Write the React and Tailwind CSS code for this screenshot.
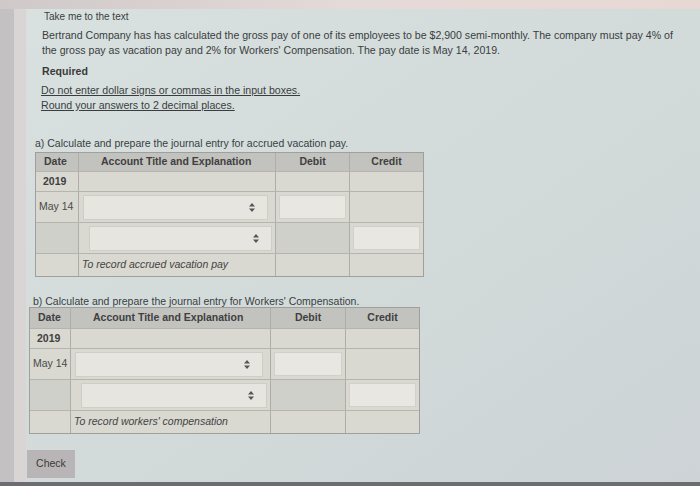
import { useState } from "react";

const tables = [
  {
    key: "a",
    title: "a) Calculate and prepare the journal entry for accrued vacation pay.",
    note: "To record accrued vacation pay",
    pad: "pl-[35px]",
    titlePad: "pl-[35px]",
    head: "h-[18px]",
    cols: ["w-[43px]", "w-[197px]", "w-[74px]", "w-[73px]"],
  },
  {
    key: "b",
    title: "b) Calculate and prepare the journal entry for Workers' Compensation.",
    note: "To record workers' compensation",
    pad: "pl-[29px]",
    titlePad: "pl-[33px]",
    head: "h-[20px]",
    cols: ["w-[41px]", "w-[200px]", "w-[75px]", "w-[73px]"],
  },
];

function SelectBox({ indent }) {
  return (
    <div className={`h-[25px] flex items-center justify-end pr-[12px] bg-[#e6e5e0] border border-[#cfcdc6] ${indent ? "ml-[10px] mr-[3px]" : "ml-[4px] mr-[7px]"}`}>
      <svg width="6" height="9" viewBox="0 0 6 9">
        <path d="M3 0 L6 3.5 H0 Z M3 9 L6 5.5 H0 Z" fill="#555" />
      </svg>
    </div>
  );
}

function TextBox() {
  return <div className="h-[24px] mx-[3px] bg-[#e8e7e2] border border-[#d2d0ca]" />;
}

function Journal({ t }) {
  const [c0, c1, c2, c3] = t.cols;
  const cell = "border-r border-[#aeada8] flex items-center";
  return (
    <div className={t.pad}>
      <div className="w-fit border border-[#a09f9b] bg-[#d9d8d1] text-[10.5px] text-[#3a3a3a]">
        <div className={`flex ${t.head} bg-[#c2c2bf] font-bold text-[#404040]`}>
          <div className={`${c0} ${cell} pl-[8px]`}>Date</div>
          <div className={`${c1} ${cell} pl-[22px]`}>Account Title and Explanation</div>
          <div className={`${c2} ${cell} justify-center`}>Debit</div>
          <div className={`${c3} flex items-center justify-center`}>Credit</div>
        </div>
        <div className="flex h-[20px] border-t border-[#b5b4ae]">
          <div className={`${c0} ${cell} pl-[7px] font-bold text-[#404040]`}>2019</div>
          <div className={`${c1} ${cell}`} />
          <div className={`${c2} ${cell}`} />
          <div className={c3} />
        </div>
        <div className="flex h-[31px] border-t border-[#b5b4ae]">
          <div className={`${c0} ${cell} pl-[3px] text-[#4a4a4a]`}>May 14</div>
          <div className={`${c1} ${cell}`}>
            <div className="flex-1"><SelectBox /></div>
          </div>
          <div className={`${c2} ${cell}`}>
            <div className="flex-1"><TextBox /></div>
          </div>
          <div className={c3} />
        </div>
        <div className="flex h-[31px] border-t border-[#b5b4ae]">
          <div className={`${c0} ${cell} bg-[#d0d0ca]`} />
          <div className={`${c1} ${cell}`}>
            <div className="flex-1"><SelectBox indent /></div>
          </div>
          <div className={`${c2} ${cell} bg-[#d0d0ca]`} />
          <div className={`${c3} flex items-center`}>
            <div className="flex-1"><TextBox /></div>
          </div>
        </div>
        <div className="flex h-[23px] border-t border-[#b5b4ae]">
          <div className={`${c0} ${cell}`} />
          <div className={`${c1} ${cell} pl-[3px] italic text-[#444]`}>{t.note}</div>
          <div className={`${c2} ${cell}`} />
          <div className={c3} />
        </div>
      </div>
    </div>
  );
}

export default function App() {
  const [checked, setChecked] = useState(false);
  return (
    <div
      className="w-[700px] h-[486px] overflow-hidden flex flex-col bg-[#d3dcdb] text-[#3a3d40]"
      style={{ fontFamily: '"Liberation Sans", Arial, sans-serif' }}
    >
      <div className="h-[9px] shrink-0 bg-gradient-to-r from-[#cfc9c9] via-[#e4dad8] to-[#e8d8d4]" />
      <div className="flex flex-1 min-h-0">
        <div className="w-[14px] shrink-0 bg-[#c3c1c2]" />
        <div className="w-[12px] shrink-0 bg-[#d9d5d4]" />
        <div className="flex-1 flex flex-col bg-gradient-to-br from-[#d8e1df] via-[#d2dbda] to-[#cdd3d6]">
          <div className="pl-[18px] pr-[14px] text-[10.6px] leading-[15px]">
            <p className="text-[10px]">Take me to the text</p>
            <p className="mt-[4px] -ml-[2px]">
              Bertrand Company has has calculated the gross pay of one of its employees to be $2,900 semi-monthly. The company must pay 4% of the gross pay as vacation pay and 2% for Workers' Compensation. The pay date is May 14, 2019.
            </p>
            <p className="mt-[6px] -ml-[2px] font-bold text-[#3a3a3a]">Required</p>
            <p className="mt-[4px] -ml-[3px] underline">Do not enter dollar signs or commas in the input boxes.</p>
            <p className="-ml-[3px] underline">Round your answers to 2 decimal places.</p>
          </div>
          <div className="-ml-[26px] mt-[23px]">
            <p className={`${tables[0].titlePad} text-[10.5px] leading-[14px] mb-[2px]`}>{tables[0].title}</p>
            <Journal t={tables[0]} />
          </div>
          <div className="-ml-[26px] mt-[17px]">
            <p className={`${tables[1].titlePad} text-[10.5px] leading-[14px] -mb-[1px]`}>{tables[1].title}</p>
            <Journal t={tables[1]} />
          </div>
          <div className="pl-[1px] mt-[16px]">
            <button
              onClick={() => setChecked(!checked)}
              className="w-[48px] h-[28px] bg-[#b9b5b7] text-[10.5px] text-[#3a3a3a]"
            >
              Check
            </button>
          </div>
        </div>
      </div>
      <div className="h-[4px] shrink-0 bg-[#6b6d70]" />
    </div>
  );
}
